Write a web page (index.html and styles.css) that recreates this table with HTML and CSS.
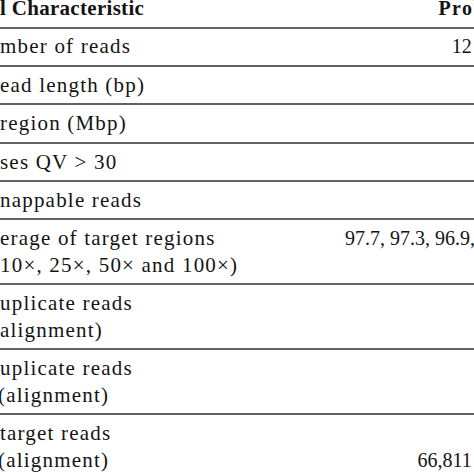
FILE: index.html
```html
<!DOCTYPE html>
<html>
<head>
<meta charset="utf-8">
<link rel="stylesheet" href="styles.css">
</head>
<body>
<table class="data">
  <thead>
    <tr><th class="label">l Characteristic</th><th class="value"><span class="head-shift">Proband</span></th></tr>
  </thead>
  <tbody>
    <tr><td class="label">mber of reads</td><td class="value">12 (0.5)</td></tr>
    <tr><td class="label">ead length (bp)</td><td class="value"></td></tr>
    <tr><td class="label">region (Mbp)</td><td class="value"></td></tr>
    <tr><td class="label">ses QV &gt; 30</td><td class="value"></td></tr>
    <tr><td class="label">nappable reads</td><td class="value"></td></tr>
    <tr><td class="label">erage of target regions<br>10×, 25×, 50× and 100×)</td><td class="value">97.7, 97.3, 96.9, 94.2</td></tr>
    <tr><td class="label">uplicate reads<br>alignment)</td><td class="value"></td></tr>
    <tr><td class="label">uplicate reads<br><span class="cut">(alignment)</span></td><td class="value"></td></tr>
    <tr><td class="label">target reads<br><span class="cut">(alignment)</span></td><td class="value"><br>66,811 (5.2)</td></tr>
  </tbody>
</table>
</body>
</html>
```
FILE: styles.css
```css
html, body {
  margin: 0;
  padding: 0;
  background: #ffffff;
  overflow: hidden;
}
body {
  width: 474px;
  height: 474px;
}
.data {
  border-collapse: collapse;
  margin-top: -9.8px;
  width: 515px;
  color: #141414;
}
.data th,
.data td {
  padding: 4.9px 0;
  line-height: 26.6px;
  vertical-align: top;
  white-space: nowrap;
}
.data tbody td {
  border-top: 2px solid #626262;
}
.label {
  text-align: left;
  font-family: "Liberation Serif", serif;
  font-size: 21px;
  letter-spacing: 1.2px;
  font-weight: normal;
}
.value {
  text-align: right;
  font-family: "Liberation Serif", serif;
  font-size: 20px;
  font-weight: normal;
}
.data th {
  font-weight: bold;
}
.data th.label {
  letter-spacing: 0.3px;
}
.head-shift {
  display: inline-block;
  letter-spacing: 1.5px;
  margin-right: -8px;
}
.cut {
  display: inline-block;
  margin-left: -2px;
}
```
